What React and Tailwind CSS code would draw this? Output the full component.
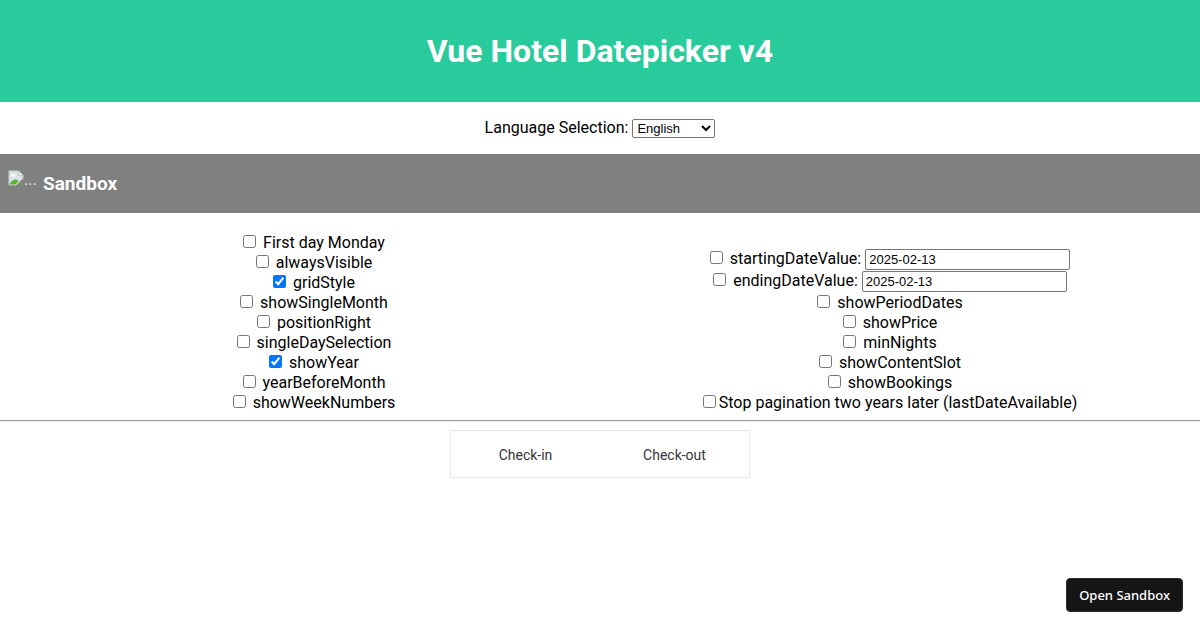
import React, { useState } from "react"

const displayOptions = [
  { id: "firstDayMonday", label: "First day Monday" },
  { id: "alwaysVisible", label: "alwaysVisible" },
  { id: "gridStyle", label: "gridStyle" },
  { id: "showSingleMonth", label: "showSingleMonth" },
  { id: "positionRight", label: "positionRight" },
  { id: "singleDaySelection", label: "singleDaySelection" },
  { id: "showYear", label: "showYear" },
  { id: "yearBeforeMonth", label: "yearBeforeMonth" },
  { id: "showWeekNumbers", label: "showWeekNumbers" },
]

const bookingOptions = [
  { id: "showPeriodDates", label: "showPeriodDates" },
  { id: "showPrice", label: "showPrice" },
  { id: "minNights", label: "minNights" },
  { id: "showContentSlot", label: "showContentSlot" },
  { id: "showBookings", label: "showBookings" },
]

function Checkbox({ id, checked, onToggle }) {
  return (
    <input
      type="checkbox"
      id={id}
      checked={checked}
      onChange={() => onToggle(id)}
      className="mt-[3px] mr-[3px] mb-[3px] ml-1 size-[13px]"
    />
  )
}

function OptionRow({ id, label, checked, onToggle }) {
  return (
    <div className="h-5">
      <Checkbox id={id} checked={checked} onToggle={onToggle} />{" "}
      <label htmlFor={id}>{label}</label>
    </div>
  )
}

function DateRow({ id, checked, onToggle }) {
  const [value, setValue] = useState("2025-02-13")
  return (
    <div className="h-[22px]">
      <Checkbox id={id} checked={checked} onToggle={onToggle} />{" "}
      <label htmlFor={id}>{id}:</label>{" "}
      <input
        type="text"
        aria-label={id}
        value={value}
        onChange={(e) => setValue(e.target.value)}
        className="h-[21px] w-[205px] border border-[#767676] bg-white px-[3px] font-['Liberation_Sans',sans-serif] text-[13px] rounded-xs"
      />
    </div>
  )
}

function BrokenImage() {
  return (
    <span className="flex h-7 w-7 items-start font-normal" role="img" aria-label="logo">
      <svg width="16" height="16" viewBox="0 0 16 16" className="shrink-0">
        <path d="M1 1h9.500l4.500 4.500v3L8 15H1z" fill="#d3d9e0" stroke="#d0d0d0" />
        <path d="M2 2h8v4h4v2.500L8 14H2z" fill="#dde3ea" />
        <path d="M10.500 1v4.500H15z" fill="#f5f5f5" stroke="#b5b5b5" strokeWidth="0.700" />
        <path d="M3 5.500c0-1 1-1.500 1.700-1 .5-1 2.300-.8 2.300.5 1 0 1 1 .4 1.200H3.500z" fill="#fff" />
        <path d="M1.500 14.500C2.500 12 5 9.500 7 9.500c1.500 0 2.700.5 3.500 1.500L7.500 14.500z" fill="#53b232" />
        <path d="M11.500 15l3-3v3z" fill="#53b232" />
        <path d="M9 15.500l6.500-6" stroke="#888" strokeWidth="1.400" />
      </svg>
      <span className="text-base leading-5 text-white/80">...</span>
    </span>
  )
}

export default function App() {
  const [language, setLanguage] = useState("English")
  const [enabled, setEnabled] = useState({ gridStyle: true, showYear: true })

  const toggle = (id) => setEnabled((prev) => ({ ...prev, [id]: !prev[id] }))

  return (
    <div className="min-h-screen bg-white font-[Roboto,sans-serif] text-base leading-5 text-black">
      <header className="bg-[#29ca9c] px-4 pt-8 pb-8 text-center text-white">
        <h1 className="text-[32px] leading-[38px] font-bold">Vue Hotel Datepicker v4</h1>
      </header>

      <div className="py-4 text-center">
        <label htmlFor="language">Language Selection:</label>{" "}
        <select
          id="language"
          value={language}
          onChange={(e) => setLanguage(e.target.value)}
          className="h-[19px] w-[83px] border border-[#767676] bg-white font-['Liberation_Sans',sans-serif] text-[13px] leading-4 rounded-xs"
        >
          <option>English</option>
          <option>Español</option>
          <option>Français</option>
          <option>Português</option>
        </select>
      </div>

      <div className="flex h-[59px] items-center gap-[7px] bg-[#808080] px-2 text-white">
        <BrokenImage />
        <h3 className="text-[19px] leading-6 font-bold">Sandbox</h3>
      </div>

      <div className="grid grid-cols-2 items-end px-6 pt-[19px] text-center">
        <div>
          {displayOptions.map((option) => (
            <OptionRow key={option.id} {...option} checked={!!enabled[option.id]} onToggle={toggle} />
          ))}
        </div>
        <div>
          <DateRow id="startingDateValue" checked={!!enabled.startingDateValue} onToggle={toggle} />
          <DateRow id="endingDateValue" checked={!!enabled.endingDateValue} onToggle={toggle} />
          {bookingOptions.map((option) => (
            <OptionRow key={option.id} {...option} checked={!!enabled[option.id]} onToggle={toggle} />
          ))}
          <div className="h-5">
            <Checkbox id="lastDateAvailable" checked={!!enabled.lastDateAvailable} onToggle={toggle} />
            <label htmlFor="lastDateAvailable">Stop pagination two years later (lastDateAvailable)</label>
          </div>
        </div>
      </div>

      <hr className="my-2 h-[2px] border-t border-b border-t-[#9a9a9a] border-b-[#eeeeee]" />

      {/* Datepicker input */}
      <div className="mx-auto grid h-12 w-[300px] grid-cols-2 border border-[#e9e9e9] text-sm leading-[48px] text-[#35343d]">
        <button type="button">Check-in</button>
        <button type="button">Check-out</button>
      </div>

      <a
        href="#sandbox"
        className="fixed right-[17px] bottom-[18px] rounded-sm border border-[#2a2a2a] bg-[#151515] px-3 py-2 font-['Noto_Sans',sans-serif] text-[13px] leading-4 font-medium text-white"
      >
        Open Sandbox
      </a>
    </div>
  )
}
